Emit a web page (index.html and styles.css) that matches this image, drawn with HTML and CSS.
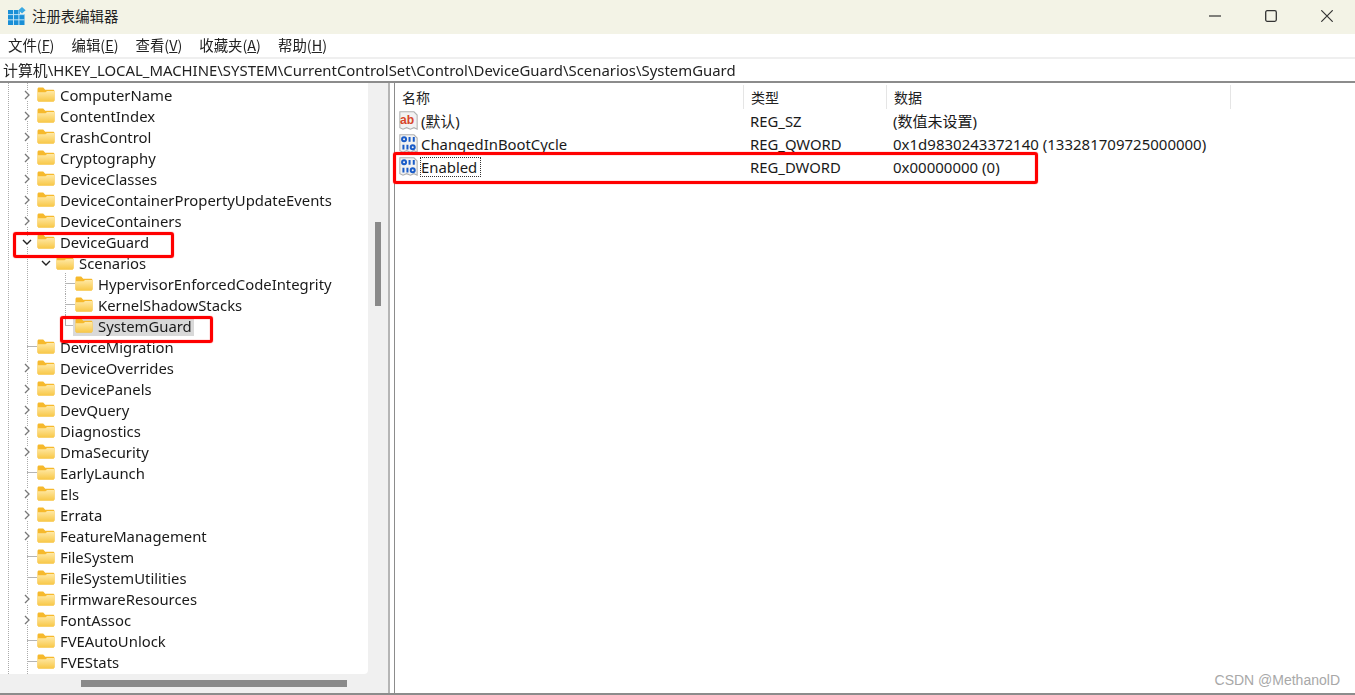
FILE: index.html
```html
<!DOCTYPE html>
<html lang="zh-CN">
<head>
<meta charset="utf-8">
<title>注册表编辑器</title>
<link rel="stylesheet" href="styles.css">
</head>
<body>
<svg class="defs" width="0" height="0" aria-hidden="true">
  <defs>
    <linearGradient id="fg" x1="0" y1="0" x2="0" y2="1">
      <stop offset="0" stop-color="#ffe9a6"/><stop offset="1" stop-color="#f8c848"/>
    </linearGradient>
    <symbol id="folder" viewBox="0 0 18 15">
      <path d="M0.5 2.2C0.5 1.2 1.1.6 2 .6h4.2l2 2.2h7.8c1 0 1.5.6 1.5 1.5v8.6c0 .9-.6 1.5-1.5 1.5H2c-.9 0-1.5-.6-1.5-1.5z" fill="#f6b92c"/>
      <path d="M.5 5.2h8l1.6-1.3h6.1c.8 0 1.3.5 1.3 1.3v7.7c0 .9-.6 1.5-1.5 1.5H2c-.9 0-1.5-.6-1.5-1.5z" fill="url(#fg)"/>
    </symbol>
    <symbol id="right" viewBox="0 0 10 10"><path d="M3 1l4 4-4 4" fill="none" stroke="#777" stroke-width="1.3"/></symbol>
    <symbol id="down" viewBox="0 0 10 10"><path d="M1 3l4 4 4-4" fill="none" stroke="#222" stroke-width="1.4"/></symbol>
    <symbol id="bin" viewBox="0 0 18 18">
      <path d="M.8.8h13.4l3 3v13.4l-3-1.4-3.4 1.4-3.6-1.4-3.4 1.4L.8 15.8z" fill="#f2f2f2" stroke="#b0b0b0"/>
      <g fill="none" stroke="#1a5cc8" stroke-width="1.9">
        <circle cx="4.8" cy="5" r="1.9"/>
        <path d="M10 2.8v4.6M14 2.8v4.6M4.2 10.2v4.6M8 10.2v4.6"/>
        <circle cx="13" cy="12.5" r="1.9"/>
      </g>
    </symbol>
  </defs>
</svg>
<div class="window">
  <header class="titlebar">
    <svg class="appicon" viewBox="0 0 18 18" width="18" height="18" aria-hidden="true">
      <path d="M0 3h12v4h4.5v11H0z" fill="#1a8fd6"/>
      <path d="M5.5 3v15M10.9 3v15M0 7.6h16.5M0 12.8h16.5" stroke="#cfeaf8" stroke-width=".9"/>
      <path d="M14 0l3.6 3.2L14 6.4l-3.6-3.2z" fill="#3aa9e2"/>
    </svg>
    <span class="title">注册表编辑器</span>
    <div class="controls">
      <svg viewBox="0 0 12 12" width="12" height="12" aria-hidden="true"><path d="M0 6h12" stroke="#333" stroke-width="1.2"/></svg>
      <svg viewBox="0 0 12 12" width="12" height="12" aria-hidden="true"><rect x=".7" y=".7" width="10.6" height="10.6" rx="1.5" fill="none" stroke="#333" stroke-width="1.3"/></svg>
      <svg viewBox="0 0 12 12" width="12" height="12" aria-hidden="true"><path d="M.3.3l11.4 11.4M11.7.3L.3 11.7" stroke="#333" stroke-width="1.2"/></svg>
    </div>
  </header>
  <nav class="menubar">
    <span>文件(<u>F</u>)</span><span>编辑(<u>E</u>)</span><span>查看(<u>V</u>)</span><span>收藏夹(<u>A</u>)</span><span>帮助(<u>H</u>)</span>
  </nav>
  <div class="address">计算机\HKEY_LOCAL_MACHINE\SYSTEM\CurrentControlSet\Control\DeviceGuard\Scenarios\SystemGuard</div>
  <main class="panes">
    <section class="treepane">
      <div class="treeview">
        <div class="tree">
          <div class="row"><svg class="tw"><use href="#right"/></svg><svg class="fo"><use href="#folder"/></svg><span>ComputerName</span></div>
          <div class="row"><svg class="tw"><use href="#right"/></svg><svg class="fo"><use href="#folder"/></svg><span>ContentIndex</span></div>
          <div class="row"><svg class="tw"><use href="#right"/></svg><svg class="fo"><use href="#folder"/></svg><span>CrashControl</span></div>
          <div class="row"><svg class="tw"><use href="#right"/></svg><svg class="fo"><use href="#folder"/></svg><span>Cryptography</span></div>
          <div class="row"><svg class="tw"><use href="#right"/></svg><svg class="fo"><use href="#folder"/></svg><span>DeviceClasses</span></div>
          <div class="row"><svg class="tw"><use href="#right"/></svg><svg class="fo"><use href="#folder"/></svg><span>DeviceContainerPropertyUpdateEvents</span></div>
          <div class="row"><svg class="tw"><use href="#right"/></svg><svg class="fo"><use href="#folder"/></svg><span>DeviceContainers</span></div>
          <div class="row"><svg class="tw"><use href="#down"/></svg><svg class="fo"><use href="#folder"/></svg><span>DeviceGuard</span></div>
          <div class="row lv1"><svg class="tw"><use href="#down"/></svg><svg class="fo"><use href="#folder"/></svg><span>Scenarios</span></div>
          <div class="row lv2"><i class="dash"></i><svg class="fo"><use href="#folder"/></svg><span>HypervisorEnforcedCodeIntegrity</span></div>
          <div class="row lv2"><i class="dash"></i><svg class="fo"><use href="#folder"/></svg><span>KernelShadowStacks</span></div>
          <div class="row lv2 sel"><i class="dash"></i><div class="selbox"><svg class="fo"><use href="#folder"/></svg><span>SystemGuard</span></div></div>
          <div class="row"><i class="dash"></i><svg class="fo"><use href="#folder"/></svg><span>DeviceMigration</span></div>
          <div class="row"><svg class="tw"><use href="#right"/></svg><svg class="fo"><use href="#folder"/></svg><span>DeviceOverrides</span></div>
          <div class="row"><svg class="tw"><use href="#right"/></svg><svg class="fo"><use href="#folder"/></svg><span>DevicePanels</span></div>
          <div class="row"><svg class="tw"><use href="#right"/></svg><svg class="fo"><use href="#folder"/></svg><span>DevQuery</span></div>
          <div class="row"><svg class="tw"><use href="#right"/></svg><svg class="fo"><use href="#folder"/></svg><span>Diagnostics</span></div>
          <div class="row"><svg class="tw"><use href="#right"/></svg><svg class="fo"><use href="#folder"/></svg><span>DmaSecurity</span></div>
          <div class="row"><i class="dash"></i><svg class="fo"><use href="#folder"/></svg><span>EarlyLaunch</span></div>
          <div class="row"><svg class="tw"><use href="#right"/></svg><svg class="fo"><use href="#folder"/></svg><span>Els</span></div>
          <div class="row"><svg class="tw"><use href="#right"/></svg><svg class="fo"><use href="#folder"/></svg><span>Errata</span></div>
          <div class="row"><svg class="tw"><use href="#right"/></svg><svg class="fo"><use href="#folder"/></svg><span>FeatureManagement</span></div>
          <div class="row"><i class="dash"></i><svg class="fo"><use href="#folder"/></svg><span>FileSystem</span></div>
          <div class="row"><i class="dash"></i><svg class="fo"><use href="#folder"/></svg><span>FileSystemUtilities</span></div>
          <div class="row"><svg class="tw"><use href="#right"/></svg><svg class="fo"><use href="#folder"/></svg><span>FirmwareResources</span></div>
          <div class="row"><svg class="tw"><use href="#right"/></svg><svg class="fo"><use href="#folder"/></svg><span>FontAssoc</span></div>
          <div class="row"><i class="dash"></i><svg class="fo"><use href="#folder"/></svg><span>FVEAutoUnlock</span></div>
          <div class="row"><i class="dash"></i><svg class="fo"><use href="#folder"/></svg><span>FVEStats</span></div>
        </div>
        <div class="vscroll"><div class="vthumb"></div></div>
      </div>
      <div class="hscroll"><div class="hthumb"></div></div>
      <div class="mark mark-a"></div>
      <div class="mark mark-b"></div>
    </section>
    <div class="splitter"></div>
    <section class="listpane">
      <div class="lhead">
        <div class="c1">名称</div><div class="c2">类型</div><div class="c3">数据</div>
      </div>
      <div class="lrow">
        <div class="c1 name">
          <svg class="ic" viewBox="0 0 18 18" aria-hidden="true">
            <path d="M.8.8h13.4l3 3v13.4l-3-1.4-3.4 1.4-3.6-1.4-3.4 1.4L.8 15.8z" fill="#f2f2f2" stroke="#b0b0b0"/>
            <text x="1" y="12" class="abtext">ab</text>
          </svg>
          <span class="nm">(默认)</span>
        </div>
        <div class="c2">REG_SZ</div><div class="c3">(数值未设置)</div>
      </div>
      <div class="lrow">
        <div class="c1 name"><svg class="ic"><use href="#bin"/></svg><span class="nm">ChangedInBootCycle</span></div>
        <div class="c2">REG_QWORD</div><div class="c3">0x1d9830243372140 (133281709725000000)</div>
      </div>
      <div class="lrow">
        <div class="c1 name"><svg class="ic"><use href="#bin"/></svg><span class="nm focus">Enabled</span></div>
        <div class="c2">REG_DWORD</div><div class="c3">0x00000000 (0)</div>
      </div>
      <div class="mark mark-c"></div>
      <div class="watermark">CSDN @MethanolD</div>
    </section>
  </main>
</div>
</body>
</html>
```
FILE: styles.css
```css
* { box-sizing: border-box; }
html, body { margin: 0; height: 100%; overflow: hidden; }
body { background: #fff; color: #1a1a1a; font-family: "Noto Sans", "Noto Sans CJK SC", sans-serif; font-size: 14.85px; }
.defs { position: absolute; }
.window { height: 695px; display: flex; flex-direction: column; filter: blur(.35px); }

.titlebar { height: 34px; background: #f3f3e6; display: flex; align-items: center; padding: 0 0 2px 8px; flex: none; }
.appicon { flex: none; }
.title { margin: 0 0 2px 6px; font-size: 14.4px; font-family: "Noto Sans CJK SC", sans-serif; color: #222; }
.controls { margin-left: auto; display: flex; gap: 44px; padding-right: 22px; align-items: center; }
.controls svg { display: block; }

.menubar { height: 23px; flex: none; display: flex; align-items: center; padding: 0 0 2px 8px; gap: 17px; font-size: 14.4px; font-family: "Noto Sans CJK SC", sans-serif; color: #222; }
.address { height: 26px; flex: none; border-top: 2px solid #efefef; border-bottom: 2px solid #8c8c8c; padding-left: 3px; line-height: 23px; font-size: 14.92px; white-space: nowrap; color: #222; }

.panes { flex: 1; display: flex; min-height: 0; border-bottom: 2px solid #8c8c8c; }
.treepane { width: 388px; flex: none; display: flex; flex-direction: column; position: relative; background: #f0f0f0; }
.treeview { flex: 1; display: flex; min-height: 0; }
.tree {
  width: 368px; flex: none; padding-top: 1px; overflow: hidden; border-radius: 0 0 4px 0;
  background:
    linear-gradient(#aaa 50%, transparent 50%) 8px 0 / 1px 2px repeat-y,
    linear-gradient(#aaa 50%, transparent 50%) 27px 0 / 1px 2px repeat-y,
    #fff;
}
.row { height: 21px; display: flex; align-items: center; padding-left: 22px; white-space: nowrap; }
.row .tw { width: 10px; height: 10px; flex: none; margin-right: 5px; background: #fff; }
.row .fo { width: 18px; height: 15px; flex: none; margin-right: 5px; }
.row .dash { width: 10px; flex: none; height: 1px; margin-left: 5px; background: #b5b5b5; }
.lv1 { padding-left: 41px; }
.lv2 { padding-left: 60px; background: linear-gradient(#aaa 50%, transparent 50%) 65px 0 / 1px 2px repeat-y; }
.lv2.sel { background: linear-gradient(#aaa, #aaa) 65px 0 / 1px 10px no-repeat; }
.selbox { display: flex; align-items: center; height: 20px; background: #d9d9d9; padding-right: 2px; margin-left: -2px; padding-left: 2px; }

.vscroll { width: 20px; flex: none; padding: 139px 7px 0; }
.vthumb { height: 84px; background: #8a8a8a; width: 6px; }
.hscroll { height: 19px; flex: none; padding: 6px 0 0 81px; }
.hthumb { width: 266px; height: 7px; background: #8a8a8a; }

.splitter { width: 7px; flex: none; background: #fff; border-left: 2px solid #b5b5b5; border-right: 1px solid #8c8c8c; }

.listpane { flex: 1; position: relative; background: #fff; }
.lhead, .lrow { display: grid; grid-template-columns: 349px 143px 344px; white-space: nowrap; }
.lhead { height: 26px; align-items: start; padding-top: 2px; font-size: 14px; font-family: "Noto Sans CJK SC", sans-serif; color: #222; }
.lhead > div { padding-left: 7px; height: 24px; line-height: 24px; border-right: 1px solid #e5e5e5; }
.lrow { height: 23px; align-items: center; }
.lrow > div { padding-left: 6px; }
.lrow .c3 { font-size: 15px; }
.lrow .name { display: flex; align-items: center; padding-left: 4px; }
.ic { width: 19px; height: 19px; flex: none; margin-right: 2px; }
.abtext { font: bold 11.5px "Liberation Sans", sans-serif; fill: #d8452a; }
.nm { line-height: 20px; padding: 0 1px; }
.focus { outline: 1px dotted #333; outline-offset: -1px; padding: 0 4px 0 1px; }

.mark { position: absolute; border: 3px solid #ff0000; border-radius: 3px; box-shadow: 0 0 1px #ff0000, inset 0 0 1px #ff0000; pointer-events: none; }
.mark-a { left: 13px; top: 149px; width: 161px; height: 26px; }
.mark-b { left: 60px; top: 233px; width: 153px; height: 27px; }
.mark-c { left: -2px; top: 69px; width: 645px; height: 32px; }
.watermark { position: absolute; right: 15px; bottom: 5px; font: 14px "Liberation Sans", sans-serif; color: #a8a8a8; }
```
